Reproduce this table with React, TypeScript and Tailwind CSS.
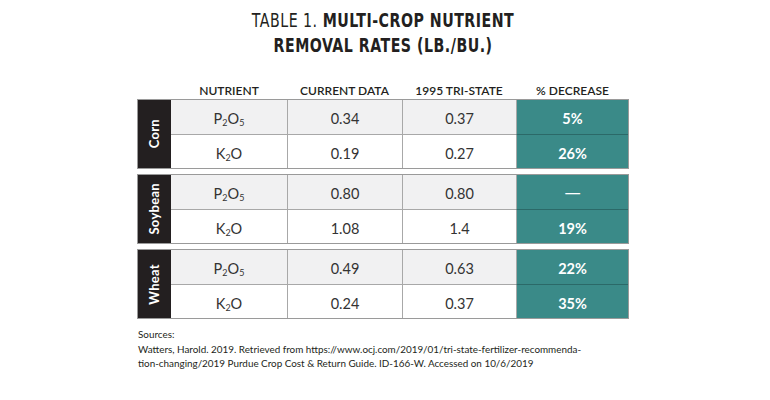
const body = { fontFamily: 'Lato, "Noto Sans", sans-serif' };
const title = { fontFamily: '"DejaVu Sans", sans-serif', fontStretch: 'condensed' };

function P2O5() {
  return (
    <span>
      P<sub className="text-[9px] relative top-[2px]">2</sub>O<sub className="text-[9px] relative top-[2px]">5</sub>
    </span>
  );
}

function K2O() {
  return (
    <span>
      K<sub className="text-[9px] relative top-[2px]">2</sub>O
    </span>
  );
}

type Row = { nutrient: React.ReactNode; current: string; tri: string; dec: React.ReactNode };

const dash = <span className="inline-block scale-x-[1.5] -mt-[3px]">—</span>;

const groups: { crop: string; rows: Row[] }[] = [
  {
    crop: 'Corn',
    rows: [
      { nutrient: <P2O5 />, current: '0.34', tri: '0.37', dec: '5%' },
      { nutrient: <K2O />, current: '0.19', tri: '0.27', dec: '26%' },
    ],
  },
  {
    crop: 'Soybean',
    rows: [
      { nutrient: <P2O5 />, current: '0.80', tri: '0.80', dec: dash },
      { nutrient: <K2O />, current: '1.08', tri: '1.4', dec: '19%' },
    ],
  },
  {
    crop: 'Wheat',
    rows: [
      { nutrient: <P2O5 />, current: '0.49', tri: '0.63', dec: '22%' },
      { nutrient: <K2O />, current: '0.24', tri: '0.37', dec: '35%' },
    ],
  },
];

export default function App() {
  return (
    <div className="w-[770px] h-[400px] bg-white flex flex-col items-center text-[#231f20]" style={body}>
      {/* Title */}
      <div className="pt-[8px] mr-[4px] text-center text-[19px] leading-[25px] tracking-[0.6px] scale-x-[0.83]" style={title}>
        <div>
          <span className="font-normal">TABLE 1. </span>
          <span className="font-bold">MULTI-CROP NUTRIENT</span>
        </div>
        <div className="font-bold">REMOVAL RATES (LB./BU.)</div>
      </div>

      {/* Table */}
      <div className="mt-[26px] mr-[4px] w-[492px] flex flex-col">
        <div className="flex h-[15px] items-start text-[12px] font-semibold text-[#231f20] leading-[14px]">
          <div className="w-[34px]" />
          <div className="w-[116px] text-center">NUTRIENT</div>
          <div className="w-[115px] text-center">CURRENT DATA</div>
          <div className="w-[114px] text-center">1995 TRI-STATE</div>
          <div className="w-[113px] text-center">% DECREASE</div>
        </div>

        <div className="flex flex-col gap-[5px]">
          {groups.map((g) => (
            <div key={g.crop} className="flex h-[70px] border border-[#9a9a9a]">
              <div className="w-[33px] bg-[#231f20] flex items-center justify-center">
                <span className="[writing-mode:vertical-rl] rotate-180 text-white text-[13px] font-bold tracking-[0.3px]">
                  {g.crop}
                </span>
              </div>
              <div className="flex-1 flex flex-col">
                {g.rows.map((r, i) => (
                  <div
                    key={i}
                    className={`flex flex-1 text-[14.5px] text-[#333] ${i === 0 ? 'bg-[#f1f1f2] border-b border-[#a8a8a8]' : 'bg-white'}`}
                  >
                    <div className="w-[116px] pt-[5px] flex items-center justify-center">{r.nutrient}</div>
                    <div className="w-[115px] pt-[5px] border-l border-[#a8a8a8] flex items-center justify-center">{r.current}</div>
                    <div className="w-[114px] pt-[5px] border-l border-[#a8a8a8] flex items-center justify-center">{r.tri}</div>
                    <div
                      className={`flex-1 pt-[5px] border-l border-[#a8a8a8] bg-[#3a8a88] text-white font-bold flex items-center justify-center ${i === 0 ? 'border-b border-b-[#2b6968] -mb-[1px]' : ''}`}
                    >
                      {r.dec}
                    </div>
                  </div>
                ))}
              </div>
            </div>
          ))}
        </div>
      </div>

      {/* Sources */}
      <div className="w-[492px] mr-[4px] mt-[8px] pl-[1px] text-[9.9px] leading-[14.5px] text-[#231f20]">
        <div>Sources:</div>
        <div>Watters, Harold. 2019. Retrieved from https://www.ocj.com/2019/01/tri-state-fertilizer-recommenda-</div>
        <div>tion-changing/2019 Purdue Crop Cost &amp; Return Guide. ID-166-W. Accessed on 10/6/2019</div>
      </div>
    </div>
  );
}
